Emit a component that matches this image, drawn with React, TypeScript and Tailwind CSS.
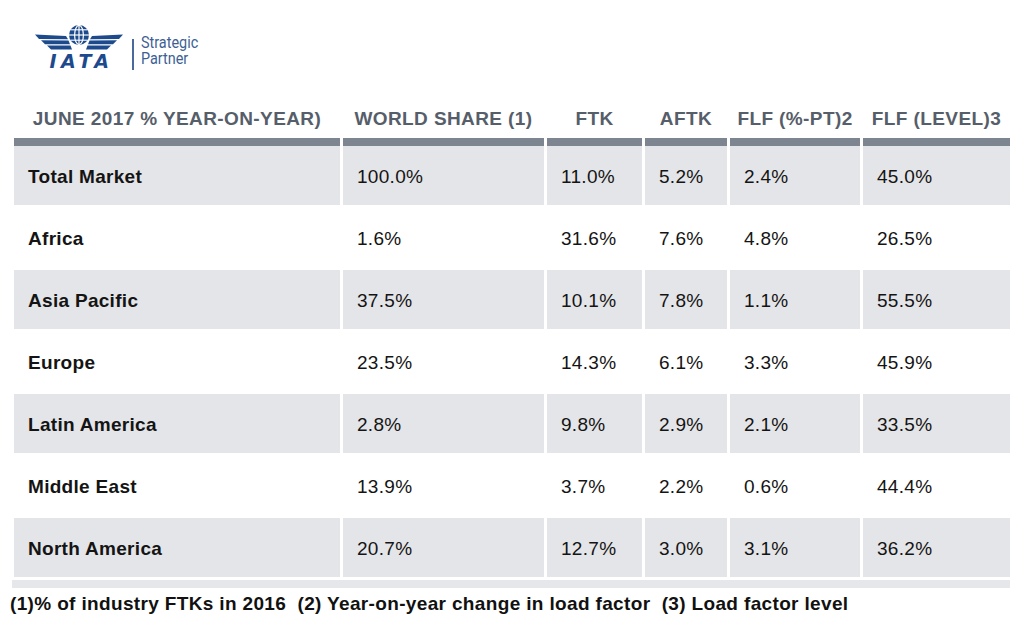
import React from "react";

const headers = [
  "JUNE 2017 % YEAR-ON-YEAR)",
  "WORLD SHARE (1)",
  "FTK",
  "AFTK",
  "FLF (%-PT)2",
  "FLF (LEVEL)3",
];

const rows: string[][] = [
  ["Total Market", "100.0%", "11.0%", "5.2%", "2.4%", "45.0%"],
  ["Africa", "1.6%", "31.6%", "7.6%", "4.8%", "26.5%"],
  ["Asia Pacific", "37.5%", "10.1%", "7.8%", "1.1%", "55.5%"],
  ["Europe", "23.5%", "14.3%", "6.1%", "3.3%", "45.9%"],
  ["Latin America", "2.8%", "9.8%", "2.9%", "2.1%", "33.5%"],
  ["Middle East", "13.9%", "3.7%", "2.2%", "0.6%", "44.4%"],
  ["North America", "20.7%", "12.7%", "3.0%", "3.1%", "36.2%"],
];

const stripesLeft = [
  "M0,10.5 L31,12 L33,15.2 L4,15 Z",
  "M6,16.3 L33.5,16.5 L35,20.2 L10,20.2 Z",
  "M12,21.4 L35.5,21.4 L37,25.4 L16,25.4 Z",
];

function mirror(d: string) {
  return d.replace(/(-?\d+(?:\.\d+)?),(-?\d+(?:\.\d+)?)/g, (_m, x, y) => `${88 - parseFloat(x)},${y}`);
}

function Logo() {
  const blue = "#1d4a8c";
  return (
    <div className="ml-[35px] flex items-start">
      <div className="flex w-[88px] flex-col items-center">
        <svg width="88" height="28" viewBox="0 0 88 28">
          {stripesLeft.map((d, i) => (
            <path key={"l" + i} d={d} fill={blue} />
          ))}
          {stripesLeft.map((d, i) => (
            <path key={"r" + i} d={mirror(d)} fill={blue} />
          ))}
          <circle cx="44" cy="11" r="11" fill="#fff" />
          <circle cx="44" cy="11" r="10" fill={blue} />
          <ellipse cx="44" cy="11" rx="4.4" ry="9.6" fill="none" stroke="#fff" strokeWidth="1.2" />
          <line x1="44" y1="1.2" x2="44" y2="20.8" stroke="#fff" strokeWidth="1.2" />
          <line x1="34" y1="11" x2="54" y2="11" stroke="#fff" strokeWidth="1.2" />
          <line x1="35.5" y1="5.8" x2="52.5" y2="5.8" stroke="#fff" strokeWidth="1.1" />
          <line x1="35.5" y1="16.2" x2="52.5" y2="16.2" stroke="#fff" strokeWidth="1.1" />
        </svg>
        <div className="mt-[1px] pl-[5px] font-['DejaVu_Sans',sans-serif] text-[19px] font-bold italic leading-[16px] tracking-[4.5px] text-[#1d4a8c]">
          IATA
        </div>
      </div>
      <div className="ml-[9px] mt-[15px] h-[31px] w-[1.5px] bg-[#4a6a9c]" />
      <div className="ml-[7px] mt-[11px] flex origin-left scale-x-[0.9] flex-col font-['Roboto',sans-serif] text-[16px] leading-[16px] text-[#3d5f96]">
        <span>Strategic</span>
        <span>Partner</span>
      </div>
    </div>
  );
}

export default function App() {
  return (
    <div className="relative h-[633px] w-[1024px] overflow-hidden bg-white pt-[24px] font-['Liberation_Sans',Arial,sans-serif]">
      <div className="h-[48px]">
        <Logo />
      </div>
      <div className="ml-[14px] mt-[36px] w-[996px]">
        <div className="grid grid-cols-[326px_201px_95px_82px_130px_147px] gap-x-[3px]">
          {headers.map((h) => (
            <div key={h} className="flex flex-col">
              <div className="h-[22px] whitespace-nowrap text-center text-[19px] font-bold leading-[22px] tracking-[0.4px] text-[#565e6a]">
                {h}
              </div>
              <div className="mt-[8px] h-[8px] bg-[#7d8590]" />
            </div>
          ))}
        </div>
        <div className="grid grid-cols-[326px_201px_95px_82px_130px_147px] gap-x-[3px] gap-y-[3px]">
          {rows.map((r, ri) =>
            r.map((c, ci) => (
              <div
                key={ri + "-" + ci}
                className={
                  "flex h-[59px] items-center whitespace-nowrap pl-[14px] pt-[3px] text-[19px] tracking-[0.3px] text-[#141414] " +
                  (ri % 2 === 0 ? "bg-[#e4e5e8] " : "bg-white ") +
                  (ci === 0 ? "font-bold" : "font-normal")
                }
              >
                {c}
              </div>
            ))
          )}
        </div>
      </div>
      <div className="ml-[12px] mt-[3px] h-[8px] w-[998px] bg-[#e6e7ea]" />
      <div className="ml-[10px] mt-[5px] whitespace-pre text-[19px] font-bold leading-[22px] tracking-[0.35px] text-[#111]">
        {"(1)% of industry FTKs in 2016  (2) Year-on-year change in load factor  (3) Load factor level"}
      </div>
    </div>
  );
}
